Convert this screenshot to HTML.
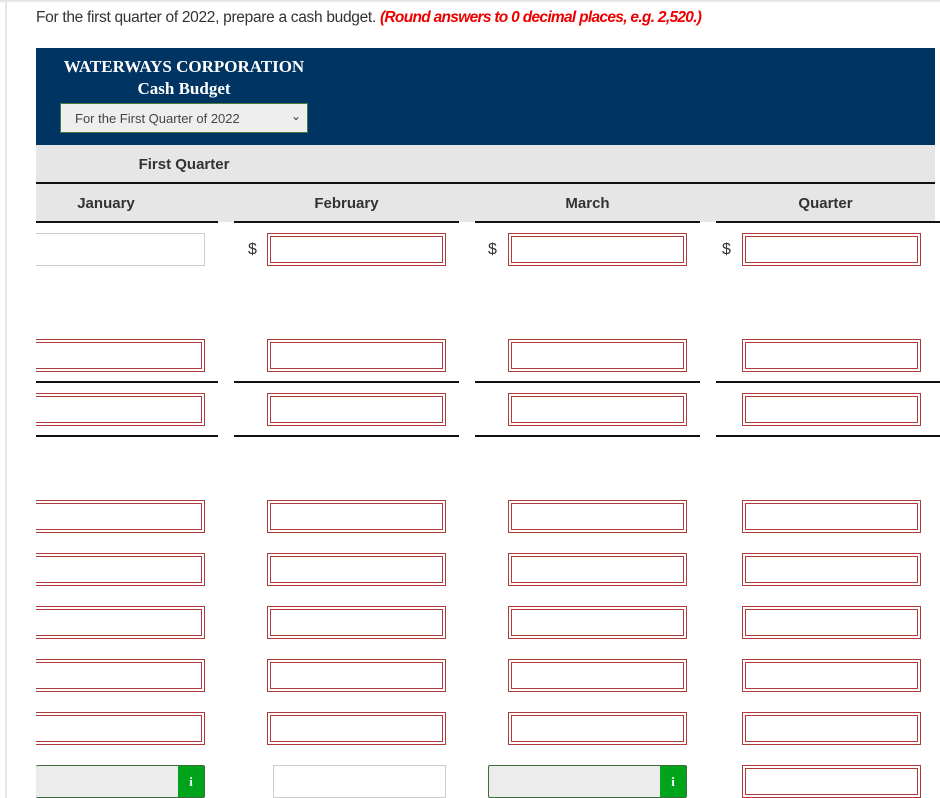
<!DOCTYPE html>
<html><head><style>
body{margin:0;width:940px;height:798px;overflow:hidden;background:#fff;font-family:"Liberation Sans",sans-serif;position:relative}
.a{position:absolute}
.vl{left:5px;top:0;width:2px;height:798px;background:#e6e6e6}
.top{left:0;top:0;width:940px;height:3px;background:linear-gradient(#ddd,#fff)}
.q{left:36px;top:9px;font-size:15.5px;color:#333;letter-spacing:-0.3px}
.q i{color:#e00;font-weight:bold;letter-spacing:-0.7px}
.blue{left:36px;top:48px;width:899px;height:97px;background:#003462}
.t{color:#fff;font-family:"Liberation Serif",serif;font-weight:bold;font-size:17px;text-align:center;width:270px;left:49px}
.sel{left:60px;top:103px;width:248px;height:30px;background:#eee;border:1px solid #4a7a3a;box-sizing:border-box;font-size:13px;color:#444;padding:7px 0 0 14px}
.sel span{position:absolute;right:6px;top:5px;font-size:12px;color:#333}
.gray1{left:36px;top:145px;width:899px;height:38px;background:#e6e6e6}
.gray2{left:36px;top:184px;width:899px;height:38px;background:#e6e6e6}
.hl{height:2px;background:#111}
.h{font-weight:bold;font-size:15px;color:#333;text-align:center}
.inp{box-sizing:border-box;height:33px;border:1px solid #b03a3a;box-shadow:inset 0 0 0 2px #fff,inset 0 0 0 3px #b03a3a;background:#fff}
.jan{border-left:none;box-shadow:none}
.jan:after{content:"";position:absolute;left:0;right:2px;top:2px;bottom:2px;border:1px solid #b03a3a;border-left:none}
.d{font-size:16px;color:#333}
.pl{box-sizing:border-box;height:33px;border:1px solid #ccc;background:#fff}
.gi{box-sizing:border-box;height:33px;border:1px solid #3d6b3d;background:#ececec;border-radius:2px}
.gi b{position:absolute;right:0;top:0;width:26px;height:31px;background:#00a41a;color:#fff;font-size:13px;text-align:center;line-height:31px;font-family:"Liberation Serif",serif}
</style></head><body>
<div class="a top"></div>
<div class="a vl"></div>
<div class="a q">For the first quarter of 2022, prepare a cash budget. <i>(Round answers to 0 decimal places, e.g. 2,520.)</i></div>
<div class="a blue"></div>
<div class="a t" style="top:57px">WATERWAYS CORPORATION</div>
<div class="a t" style="top:79px">Cash Budget</div>
<div class="a sel">For the First Quarter of 2022<span>&#8964;</span></div>
<div class="a gray1"></div>
<div class="a h" style="left:36px;top:156px;width:296px">First Quarter</div>
<div class="a hl" style="left:36px;top:182px;width:899px"></div>
<div class="a gray2"></div>
<div class="a h" style="left:36px;top:195px;width:140px">January</div>
<div class="a h" style="left:234px;top:195px;width:225px">February</div>
<div class="a h" style="left:475px;top:195px;width:225px">March</div>
<div class="a h" style="left:716px;top:195px;width:219px">Quarter</div>
<div class="a hl" style="left:36px;top:221px;width:182px"></div>
<div class="a hl" style="left:234px;top:221px;width:225px"></div>
<div class="a hl" style="left:475px;top:221px;width:225px"></div>
<div class="a hl" style="left:716px;top:221px;width:224px"></div>

<div class="a pl" style="left:36px;top:233px;width:169px;border-left:none"></div>
<div class="a d" style="left:248px;top:241px">$</div>
<div class="a inp" style="left:267px;top:233px;width:179px"></div>
<div class="a d" style="left:488px;top:241px">$</div>
<div class="a inp" style="left:508px;top:233px;width:179px"></div>
<div class="a d" style="left:722px;top:241px">$</div>
<div class="a inp" style="left:742px;top:233px;width:179px"></div>

<div class="a inp jan" style="left:36px;top:339px;width:169px"></div>
<div class="a inp" style="left:267px;top:339px;width:179px"></div>
<div class="a inp" style="left:508px;top:339px;width:179px"></div>
<div class="a inp" style="left:742px;top:339px;width:179px"></div>
<div class="a hl" style="left:36px;top:381px;width:182px"></div>
<div class="a hl" style="left:234px;top:381px;width:225px"></div>
<div class="a hl" style="left:475px;top:381px;width:225px"></div>
<div class="a hl" style="left:716px;top:381px;width:224px"></div>

<div class="a inp jan" style="left:36px;top:393px;width:169px"></div>
<div class="a inp" style="left:267px;top:393px;width:179px"></div>
<div class="a inp" style="left:508px;top:393px;width:179px"></div>
<div class="a inp" style="left:742px;top:393px;width:179px"></div>
<div class="a hl" style="left:36px;top:435px;width:182px"></div>
<div class="a hl" style="left:234px;top:435px;width:225px"></div>
<div class="a hl" style="left:475px;top:435px;width:225px"></div>
<div class="a hl" style="left:716px;top:435px;width:224px"></div>

<div class="a inp jan" style="left:36px;top:500px;width:169px"></div>
<div class="a inp" style="left:267px;top:500px;width:179px"></div>
<div class="a inp" style="left:508px;top:500px;width:179px"></div>
<div class="a inp" style="left:742px;top:500px;width:179px"></div>

<div class="a inp jan" style="left:36px;top:553px;width:169px"></div>
<div class="a inp" style="left:267px;top:553px;width:179px"></div>
<div class="a inp" style="left:508px;top:553px;width:179px"></div>
<div class="a inp" style="left:742px;top:553px;width:179px"></div>

<div class="a inp jan" style="left:36px;top:606px;width:169px"></div>
<div class="a inp" style="left:267px;top:606px;width:179px"></div>
<div class="a inp" style="left:508px;top:606px;width:179px"></div>
<div class="a inp" style="left:742px;top:606px;width:179px"></div>

<div class="a inp jan" style="left:36px;top:659px;width:169px"></div>
<div class="a inp" style="left:267px;top:659px;width:179px"></div>
<div class="a inp" style="left:508px;top:659px;width:179px"></div>
<div class="a inp" style="left:742px;top:659px;width:179px"></div>

<div class="a inp jan" style="left:36px;top:712px;width:169px"></div>
<div class="a inp" style="left:267px;top:712px;width:179px"></div>
<div class="a inp" style="left:508px;top:712px;width:179px"></div>
<div class="a inp" style="left:742px;top:712px;width:179px"></div>

<div class="a gi" style="left:36px;top:765px;width:169px;border-left:none"><b>i</b></div>
<div class="a pl" style="left:273px;top:765px;width:173px"></div>
<div class="a gi" style="left:488px;top:765px;width:199px"><b>i</b></div>
<div class="a inp" style="left:742px;top:765px;width:179px"></div>
</body></html>
